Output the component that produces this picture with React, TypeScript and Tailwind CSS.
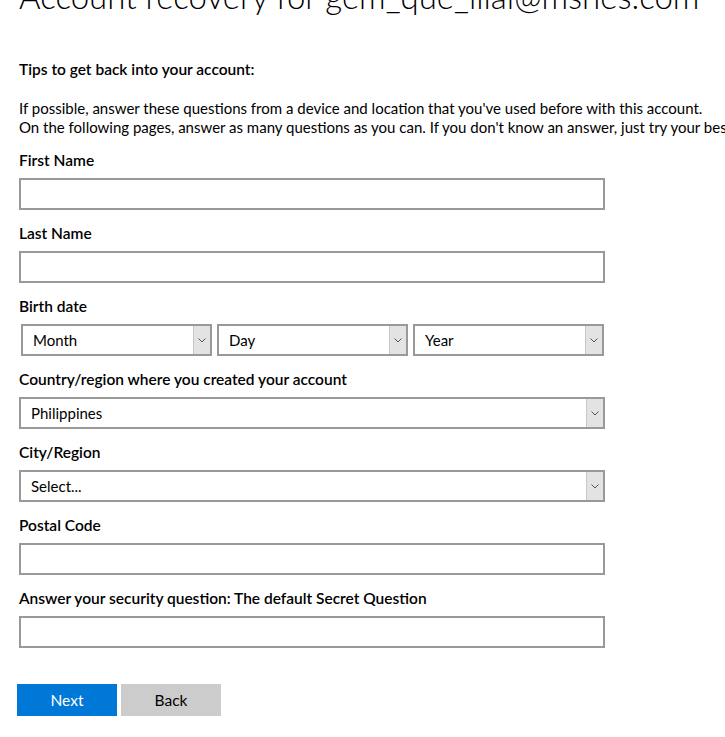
import React from "react";

const FONT = { fontFamily: "Lato, 'Open Sans', sans-serif" };

function Chevron() {
  return (
    <svg width="8" height="5" viewBox="0 0 8 5" fill="none">
      <path d="M0.5 0.5 L4 4 L7.5 0.5" stroke="#555" strokeWidth="1" />
    </svg>
  );
}

function TextBox() {
  return <div className="h-[32px] w-[586px] border-2 border-[#999999] bg-white" />;
}

function SelectBox({ label, className }: { label: string; className: string }) {
  return (
    <div className={`flex h-[32px] items-stretch border-2 border-[#999999] bg-white ${className}`}>
      <div className="flex flex-1 items-center pl-[10px] text-[15px] text-black">{label}</div>
      <div className="flex w-[17px] items-center justify-center border-l border-[#c8c8c8] bg-[#e3e3e3]">
        <Chevron />
      </div>
    </div>
  );
}

function Field({ label, children }: { label: string; children: React.ReactNode }) {
  return (
    <div className="mb-[13px]">
      <div className="h-[20px] whitespace-nowrap text-[15.5px] font-semibold leading-[20px] text-black">{label}</div>
      <div className="mt-[8px]">{children}</div>
    </div>
  );
}

export default function App() {
  return (
    <div className="h-[737px] w-[725px] overflow-hidden bg-white" style={FONT}>
      <div className="pl-[19px]">
        <h1 className="-mt-[20px] h-[33px] whitespace-nowrap text-[33px] font-light leading-[33px] text-black">
          Account recovery for gem_que_lilai@mshes.com
        </h1>
        <p className="mt-[46px] h-[20px] text-[15.5px] font-semibold leading-[20px] text-black">
          Tips to get back into your account:
        </p>
        <div className="mt-[20px] whitespace-nowrap text-[15px] leading-[19px] text-black">
          <p>If possible, answer these questions from a device and location that you've used before with this account.</p>
          <p>On the following pages, answer as many questions as you can. If you don't know an answer, just try your best guess.</p>
        </div>

        <div className="mt-[13px]">
          <Field label="First Name">
            <TextBox />
          </Field>
          <Field label="Last Name">
            <TextBox />
          </Field>
          <Field label="Birth date">
            <div className="ml-[2px] flex gap-[5px]">
              <SelectBox label="Month" className="w-[191px]" />
              <SelectBox label="Day" className="w-[191px]" />
              <SelectBox label="Year" className="w-[191px]" />
            </div>
          </Field>
          <Field label="Country/region where you created your account">
            <SelectBox label="Philippines" className="w-[586px]" />
          </Field>
          <Field label="City/Region">
            <SelectBox label="Select..." className="w-[586px]" />
          </Field>
          <Field label="Postal Code">
            <TextBox />
          </Field>
          <Field label="Answer your security question: The default Secret Question">
            <TextBox />
          </Field>
        </div>

        <div className="-ml-[2px] mt-[36px] flex gap-[4px]">
          <button className="h-[32px] w-[100px] bg-[#0078d7] pt-[2px] text-[15.5px] text-white">Next</button>
          <button className="h-[32px] w-[100px] bg-[#cccccc] pt-[2px] text-[15.5px] text-black">Back</button>
        </div>
      </div>
    </div>
  );
}
